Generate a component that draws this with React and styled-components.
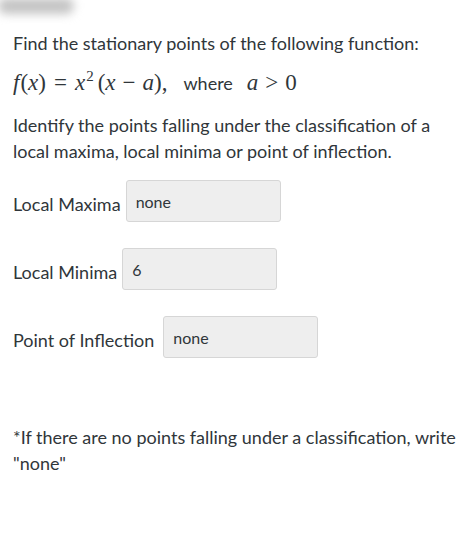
import React from 'react';
import styled, { createGlobalStyle } from 'styled-components';

const GlobalStyle = createGlobalStyle`
  html, body {
    margin: 0;
    padding: 0;
    background: #ffffff;
  }
  body {
    font-family: Lato, "Noto Sans", "Liberation Sans", sans-serif;
    color: #30363a;
  }
`;

const Page = styled.div`
  width: 474px;
  height: 535px;
  overflow: hidden;
  display: flex;
  flex-direction: column;
`;

const Smudge = styled.div`
  width: 76px;
  height: 16px;
  margin: -2px 0 0 -2px;
  background: #c4c4c4;
  border-radius: 8px;
  filter: blur(5px);
`;

const Body = styled.div`
  padding: 16px 14px 0 13px;
  font-size: 18px;
  line-height: 26px;
`;

const Para = styled.p`
  margin: ${p => p.$mt || 0}px 0 0 0;
`;

const MathLine = styled.div`
  margin-top: 14px;
  font-family: "Liberation Serif", "DejaVu Serif", serif;
  font-size: 23px;
  line-height: 26px;
  white-space: nowrap;
`;

const V = styled.i`
  font-style: italic;
  margin-right: ${p => p.$r || 0}px;
`;

const Op = styled.span`
  margin: 0 ${p => p.$m || 5}px;
`;

const Word = styled.span`
  font-family: Lato, "Noto Sans", sans-serif;
  font-size: 18px;
  margin: 0 ${p => p.$r || 0}px 0 ${p => p.$l || 0}px;
`;

const Sup = styled.sup`
  font-size: 15px;
  line-height: 0;
  vertical-align: 9px;
  margin: 0 4px 0 1px;
`;

const Rows = styled.div`
  display: flex;
  flex-direction: column;
  gap: 26px;
  margin-top: 16px;
`;

const Row = styled.div`
  display: flex;
  align-items: center;
  gap: ${p => p.$gap}px;
`;

const Label = styled.span`
  padding-top: 6px;
`;

const Field = styled.div`
  box-sizing: border-box;
  width: 155px;
  height: 42px;
  background: #eeeeee;
  border: 1px solid #d6d6d6;
  border-radius: 3px;
  padding: 11px 0 0 9px;
  font-size: 16px;
  line-height: 20px;
  color: #30363a;
`;

const Note = styled.p`
  margin: 66px 0 0 0;
`;

const answers = [
  { label: 'Local Maxima', value: 'none', gap: 5 },
  { label: 'Local Minima', value: '6', gap: 5 },
  { label: 'Point of Inflection', value: 'none', gap: 9 },
];

export default function App() {
  return (
    <Page>
      <GlobalStyle />
      <Smudge />
      <Body>
        <Para>Find the stationary points of the following function:</Para>
        <MathLine>
          <V $r={1}>f</V>(<V>x</V>)<Op $m={8}>=</Op><V>x</V><Sup>2</Sup>(<V>x</V><Op $m={7}>−</Op><V>a</V>),
          <Word $l={16} $r={14}>where</Word>
          <V>a</V><Op $m={7}>&gt;</Op>0
        </MathLine>
        <Para $mt={16}>
          Identify the points falling under the classification of a local maxima, local minima or point of inflection.
        </Para>
        <Rows>
          {answers.map(a => (
            <Row key={a.label} $gap={a.gap}>
              <Label>{a.label}</Label>
              <Field>{a.value}</Field>
            </Row>
          ))}
        </Rows>
        <Note>*If there are no points falling under a classification, write "none"</Note>
      </Body>
    </Page>
  );
}
